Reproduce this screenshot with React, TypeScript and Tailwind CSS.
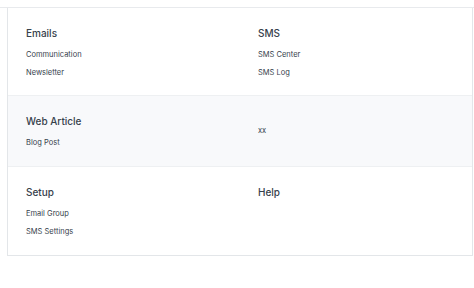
type Section = {
  title: string;
  links: string[];
};

const rows: { left: Section; right: Section | string; shaded?: boolean; pb: string }[] = [
  {
    left: { title: "Emails", links: ["Communication", "Newsletter"] },
    right: { title: "SMS", links: ["SMS Center", "SMS Log"] },
    pb: "pb-[15px]",
  },
  {
    left: { title: "Web Article", links: ["Blog Post"] },
    right: "xx",
    shaded: true,
    pb: "pb-[16px]",
  },
  {
    left: { title: "Setup", links: ["Email Group", "SMS Settings"] },
    right: { title: "Help", links: [] },
    pb: "pb-[16px]",
  },
];

function SectionBlock({ section, pb }: { section: Section; pb: string }) {
  return (
    <div className={`pl-[18px] pt-[18px] ${pb}`}>
      <h3 className="text-[10px] font-medium leading-[14px] text-[#36414c]">{section.title}</h3>
      <ul className="mt-[8px] flex flex-col gap-[4px]">
        {section.links.map((link) => (
          <li key={link} className="text-[7.5px] leading-[14px] text-[#36414c]">
            {link}
          </li>
        ))}
      </ul>
    </div>
  );
}

export default function App() {
  return (
    <div className="h-[288px] w-[474px] bg-white font-['Inter',sans-serif] antialiased">
      <div className="h-[8px] border-b border-[#e8eaed]" />
      <div className="ml-[7px] w-[466px] border-x border-b border-[#e3e6e9]">
        {rows.map((row, i) => (
          <div
            key={i}
            className={`grid grid-cols-2 ${i < rows.length - 1 ? "border-b border-[#eef0f2]" : ""} ${
              row.shaded ? "bg-[#f8f9fb]" : "bg-white"
            }`}
          >
            <SectionBlock section={row.left} pb={row.pb} />
            {typeof row.right === "string" ? (
              <div className="flex items-center pl-[18px] text-[7.5px] text-[#36414c]">{row.right}</div>
            ) : (
              <SectionBlock section={row.right} pb={row.pb} />
            )}
          </div>
        ))}
      </div>
    </div>
  );
}
